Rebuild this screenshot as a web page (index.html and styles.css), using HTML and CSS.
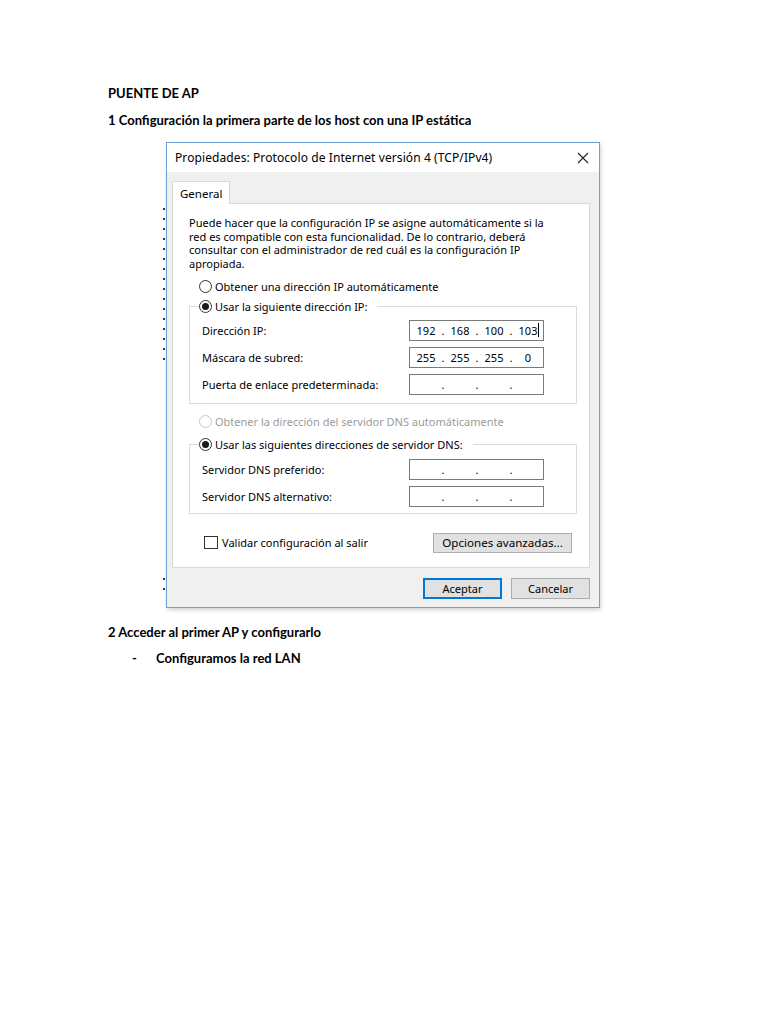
FILE: index.html
```html
<!DOCTYPE html>
<html lang="es">
<head>
<meta charset="utf-8">
<title>Puente de AP</title>
<link rel="stylesheet" href="styles.css">
</head>
<body>
<div class="page">
  <p class="doc-title">PUENTE DE AP</p>
  <p class="doc-step">1 Configuración la primera parte de los host con una IP estática</p>

  <div class="shot">
    <div class="shot-strip"></div>
    <div class="dialog">
      <div class="titlebar">
        <span class="title">Propiedades: Protocolo de Internet versión 4 (TCP/IPv4)</span>
        <svg class="close" width="12" height="12" viewBox="0 0 12 12"><path d="M1 1L11 11M11 1L1 11" stroke="#222" stroke-width="1.1" fill="none"/></svg>
      </div>
      <div class="body">
        <div class="tabs"><span class="tab">General</span></div>
        <div class="panel">
          <p class="intro">Puede hacer que la configuración IP se asigne automáticamente si la<br>red es compatible con esta funcionalidad. De lo contrario, deberá<br>consultar con el administrador de red cuál es la configuración IP<br>apropiada.</p>

          <div class="radio-row first"><span class="radio"></span><span>Obtener una dirección IP automáticamente</span></div>

          <fieldset class="group g1">
            <legend><span class="radio on"></span><span>Usar la siguiente dirección IP:</span></legend>
            <div class="row"><span class="lbl">Dirección IP:</span>
              <div class="ip"><span>192</span><i>.</i><span>168</span><i>.</i><span>100</span><i>.</i><span class="caret">103</span></div></div>
            <div class="row"><span class="lbl">Máscara de subred:</span>
              <div class="ip"><span>255</span><i>.</i><span>255</span><i>.</i><span>255</span><i>.</i><span>0</span></div></div>
            <div class="row"><span class="lbl">Puerta de enlace predeterminada:</span>
              <div class="ip"><span></span><i>.</i><span></span><i>.</i><span></span><i>.</i><span></span></div></div>
          </fieldset>

          <div class="radio-row disabled"><span class="radio"></span><span>Obtener la dirección del servidor DNS automáticamente</span></div>

          <fieldset class="group g2">
            <legend><span class="radio on"></span><span>Usar las siguientes direcciones de servidor DNS:</span></legend>
            <div class="row"><span class="lbl">Servidor DNS preferido:</span>
              <div class="ip"><span></span><i>.</i><span></span><i>.</i><span></span><i>.</i><span></span></div></div>
            <div class="row"><span class="lbl">Servidor DNS alternativo:</span>
              <div class="ip"><span></span><i>.</i><span></span><i>.</i><span></span><i>.</i><span></span></div></div>
          </fieldset>

          <div class="bottom-row">
            <div class="check-row"><span class="check"></span><span>Validar configuración al salir</span></div>
            <span class="btn adv">Opciones avanzadas...</span>
          </div>
        </div>
        <div class="footer">
          <span class="btn ok">Aceptar</span>
          <span class="btn">Cancelar</span>
        </div>
      </div>
    </div>
  </div>

  <p class="doc-step step2">2 Acceder al primer AP y configurarlo</p>
  <div class="bullet"><span class="dash">-</span><span>Configuramos la red LAN</span></div>
</div>
</body>
</html>
```

FILE: styles.css
```css
* { box-sizing: border-box; }
html, body { margin: 0; padding: 0; background: #fff; }
.page {
  padding: 85px 0 0 108px;
  font-family: "Lato", "Liberation Sans", sans-serif;
  color: #000;
}
.doc-title, .doc-step {
  margin: 0;
  font-weight: bold;
  font-size: 13px;
  line-height: 16px;
}
.doc-step { margin-top: 11px; }

.shot {
  margin: 12px 0 0 50px;
  width: 445px;
  height: 472px;
  display: flex;
  padding-top: 2px;
  background: #fff;
}
.shot-strip {
  width: 8px;
  height: 100%;
  background:
    linear-gradient(#fff 0 60px, transparent 60px 220px, #fff 220px 430px, transparent 430px 448px, #fff 448px) ,
    repeating-linear-gradient(to bottom, transparent 0 6px, #333 6px 8px, transparent 8px 10px);
  background-size: 2px 100%, 2px 100%;
  background-position: 5px 0, 5px 0;
  background-repeat: no-repeat;
}
.dialog {
  width: 434px;
  height: 466px;
  border: 1px solid #6f9fd4;
  background: #f0f0f0;
  display: flex;
  flex-direction: column;
  box-shadow: 1px 2px 4px rgba(0,0,0,0.18);
  font-family: "Noto Sans", "Open Sans", sans-serif;
  font-size: 11px;
  color: #000;
}
.titlebar {
  height: 29px;
  background: #fff;
  display: flex;
  align-items: center;
  justify-content: space-between;
  padding: 0 10px 0 8px;
}
.title { font-size: 12px; letter-spacing: 0.09px; }
.close { display: block; }
.body {
  flex: 1;
  padding: 9px 9px 0 5px;
  display: flex;
  flex-direction: column;
}
.tabs { display: flex; height: 22px; position: relative; z-index: 1; }
.tab {
  display: flex;
  align-items: center;
  padding: 0 7px;
  width: 58px;
  height: 23px;
  background: #fff;
  border: 1px solid #d9d9d9;
  border-bottom: none;
  font-size: 11.5px;
}
.panel {
  height: 365px;
  background: #fff;
  border: 1px solid #d9d9d9;
  padding: 12px 12px 0 16px;
  display: flex;
  flex-direction: column;
}
.intro {
  margin: 0;
  font-size: 11px;
  line-height: 13.7px;
  white-space: nowrap;
}
.radio-row {
  display: flex;
  align-items: center;
  gap: 3px;
  height: 18px;
  margin-left: 10px;
}
.radio-row.first { margin-top: 7px; }
.radio-row.disabled { color: #9b9b9b; margin-top: 9px; }
.radio-row.disabled .radio { border-color: #c8c8c8; }
.radio {
  width: 13px;
  height: 13px;
  border-radius: 50%;
  border: 1px solid #333;
  background: #fff;
  flex: none;
  position: relative;
}
.radio.on::after {
  content: "";
  position: absolute;
  left: 2px; top: 2px;
  width: 7px; height: 7px;
  border-radius: 50%;
  background: #1a1a1a;
}
.group {
  margin: 3px 0 0 0;
  width: 388px;
  border: 1px solid #dcdcdc;
  padding: 5px 0 0 12px;
  min-width: 0;
}
.group legend {
  display: flex;
  align-items: center;
  gap: 3px;
  padding: 0 10px 0 0;
  margin-left: -3px;
  height: 16px;
}
.g1 { height: 105px; }
.g2 { height: 77px; margin-top: 6px; padding-top: 6px; }
.row {
  display: flex;
  align-items: center;
  justify-content: space-between;
  height: 21px;
  margin-bottom: 6px;
  padding-right: 32px;
}
.ip {
  width: 135px;
  height: 21px;
  border: 1px solid #7a7a7a;
  display: grid;
  grid-template-columns: 30px 4px 30px 4px 30px 4px 30px;
  align-items: center;
  padding-left: 1px;
  font-size: 11px;
  background: #fff;
}
.ip span { text-align: center; }
.ip i { font-style: normal; text-align: center; }
.ip .caret { position: relative; }
.ip .caret::after {
  content: "";
  position: absolute;
  right: 4px;
  top: 0px;
  width: 1px;
  height: 14px;
  background: #000;
}
.bottom-row {
  display: flex;
  align-items: center;
  justify-content: space-between;
  margin-top: 19px;
  padding-right: 5px;
}
.check-row {
  display: flex;
  align-items: center;
  gap: 4px;
  margin-left: 15px;
}
.check {
  width: 14px;
  height: 13px;
  border: 1px solid #333;
  background: #fff;
}
.btn {
  display: flex;
  align-items: center;
  justify-content: center;
  width: 79px;
  height: 21px;
  background: #e1e1e1;
  border: 1px solid #adadad;
  font-size: 11px;
}
.btn.adv { width: 139px; height: 20px; font-size: 11.6px; }
.btn.ok { border: 2px solid #0078d7; }
.footer {
  display: flex;
  justify-content: flex-end;
  gap: 9px;
  margin-top: 10px;
}
.step2 { margin-top: 12px; }
.bullet {
  display: flex;
  margin-top: 10px;
  font-weight: bold;
  font-size: 13px;
  line-height: 16px;
}
.dash { width: 48px; padding-left: 24px; }
```
